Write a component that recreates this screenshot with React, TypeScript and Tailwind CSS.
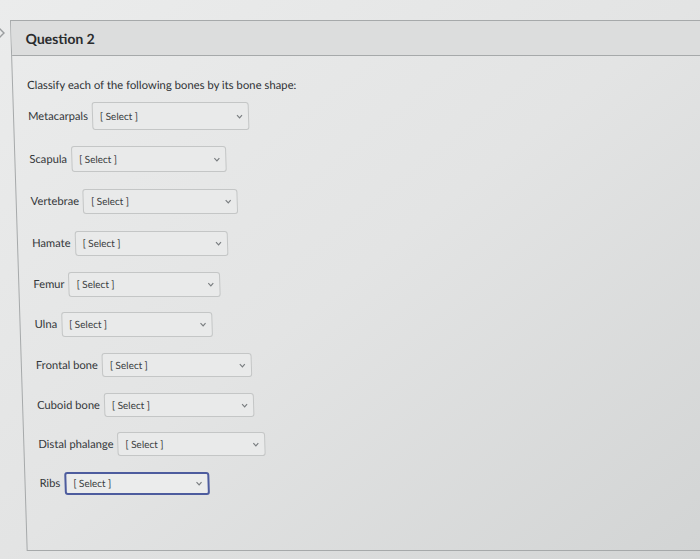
const rows = [
  { label: "Metacarpals", gap: "mt-0", h: "h-[28px]", w: "w-[157px]" },
  { label: "Scapula", gap: "mt-[16px]", h: "h-[26px]", w: "w-[155px]" },
  { label: "Vertebrae", gap: "mt-[17px]", h: "h-[25px]", w: "w-[155px]" },
  { label: "Hamate", gap: "mt-[17px]", h: "h-[25px]", w: "w-[153px]" },
  { label: "Femur", gap: "mt-[16px]", h: "h-[25px]", w: "w-[152px]" },
  { label: "Ulna", gap: "mt-[15px]", h: "h-[25px]", w: "w-[151px]" },
  { label: "Frontal bone", gap: "mt-[16px]", h: "h-[24px]", w: "w-[150px]" },
  { label: "Cuboid bone", gap: "mt-[16px]", h: "h-[24px]", w: "w-[150px]" },
  { label: "Distal phalange", gap: "mt-[15px]", h: "h-[24px]", w: "w-[148px]" },
  { label: "Ribs", gap: "mt-[16px]", h: "h-[23px]", w: "w-[145px]", focused: true },
];

function Chevron() {
  return (
    <svg width="7" height="5" viewBox="0 0 7 5" className="shrink-0">
      <path d="M1 1.2 L3.5 3.8 L6 1.2" fill="none" stroke="#7a7e81" strokeWidth="1.2" />
    </svg>
  );
}

function SelectBox({ h, w, focused }: { h: string; w: string; focused?: boolean }) {
  return (
    <div
      className={`${h} ${w} flex items-center justify-between pl-[7px] pr-[5px] rounded-[3px] ${
        focused ? "border-2 border-[#4d5c9e] bg-[#ebecec]" : "border border-[#c4c6c6] bg-[#e9eaea]"
      }`}
    >
      <span className="text-[10px] text-[#3a3d40]">[ Select ]</span>
      <Chevron />
    </div>
  );
}

export default function App() {
  return (
    <div className="relative w-[700px] h-[559px] overflow-hidden bg-gradient-to-br from-[#ebecec] via-[#e3e4e4] to-[#d2d4d4] font-['Lato','Open_Sans',sans-serif] text-[#2f3235]">
      {/* flag arrow at the edge */}
      <svg width="8" height="14" viewBox="0 0 8 14" className="absolute left-[-2px] top-[26px]">
        <path d="M1 2 L6 7 L1 12" fill="none" stroke="#9a9d9f" strokeWidth="1.4" />
      </svg>

      <div className="ml-[10px] mt-[20px] w-[720px] h-[531px] border border-[#a6a9aa] origin-top-left skew-x-[1.8deg]">
        {/* Header */}
        <div className="h-[35px] bg-[#dcdddd] border-b border-[#a6a9aa] flex items-center pl-[14px]">
          <h2 className="text-[14px] font-bold text-[#2a2c2e]">Question 2</h2>
        </div>

        {/* Body */}
        <div className="pl-[14px] pt-[21px]">
          <p className="text-[11.3px] leading-[16px] text-[#2f3235]">Classify each of the following bones by its bone shape:</p>

          <div className="mt-[9px] flex flex-col">
            {rows.map((r) => (
              <div key={r.label} className={`${r.gap} flex items-center gap-[4px]`}>
                <span className="text-[11.2px] text-[#34373a]">{r.label}</span>
                <SelectBox h={r.h} w={r.w} focused={r.focused} />
              </div>
            ))}
          </div>
        </div>
      </div>
    </div>
  );
}
